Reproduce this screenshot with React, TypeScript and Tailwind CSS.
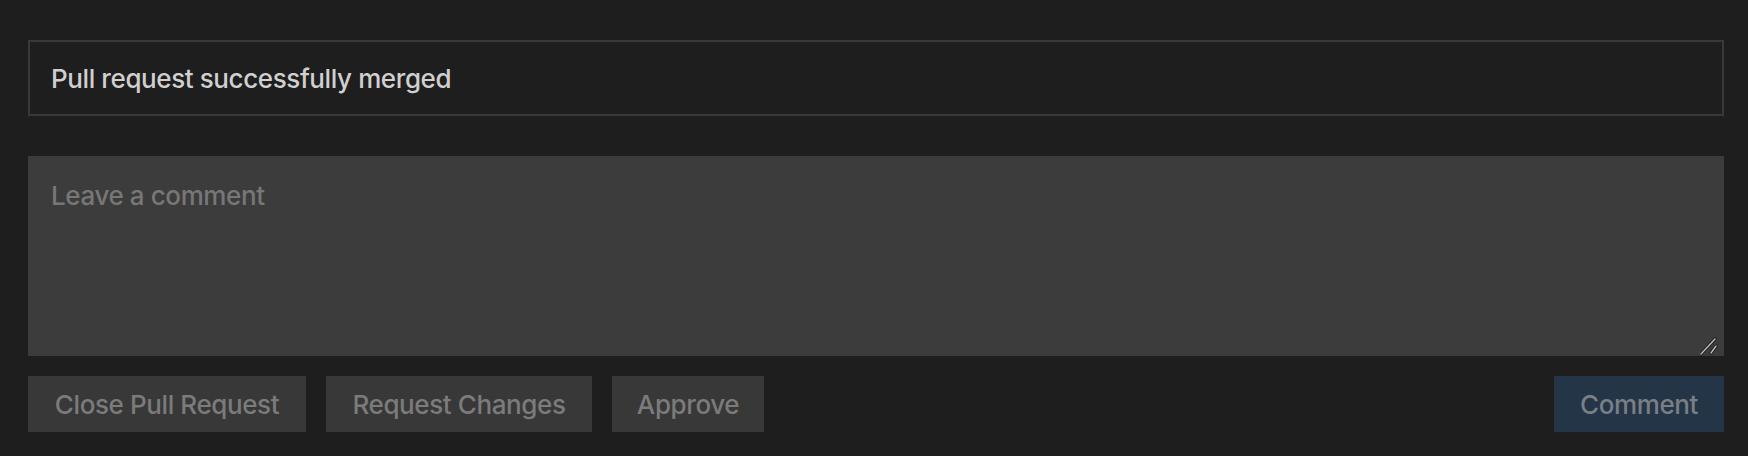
import React from "react";

export default function App() {
  const font = { fontFamily: "Inter, 'Noto Sans', sans-serif" };
  return (
    <div
      className="w-[1748px] h-[456px] bg-[#1e1e1e] pl-[28px] pr-[24px] pt-[40px] flex flex-col"
      style={font}
    >
      <div className="h-[76px] border-2 border-[#38383d] flex items-center pl-[21px] text-[26px] font-medium text-[#d0d0d0] tracking-[-0.4px]">
        Pull request successfully merged
      </div>
      <div className="relative mt-[40px] h-[200px]">
        <textarea
          className="block h-[200px] w-full bg-[#3c3c3c] text-[26px] font-medium text-[#cccccc] placeholder:text-[#777777] px-[23px] pt-[20px] outline-none resize-none tracking-[-0.4px]"
          placeholder="Leave a comment"
          style={font}
        />
        <svg
          className="absolute right-[4px] bottom-0 pointer-events-none"
          width="20"
          height="20"
          viewBox="0 0 20 20"
        >
          <path d="M1 18 L15 3 M11 17 L16 10" stroke="#1a1a1a" strokeWidth="3.2" strokeLinecap="round" fill="none" />
          <path d="M1 18 L15 3 M11 17 L16 10" stroke="#bdbdbd" strokeWidth="1.4" strokeLinecap="round" fill="none" />
        </svg>
      </div>
      <div className="mt-[20px] flex items-center h-[56px]">
        <div className="flex gap-[20px]">
          <button className="h-[56px] w-[278px] bg-[#383838] text-[#7b7b7b] text-[26px] font-medium tracking-[-0.4px]">
            Close Pull Request
          </button>
          <button className="h-[56px] w-[266px] bg-[#383838] text-[#7b7b7b] text-[26px] font-medium tracking-[-0.4px]">
            Request Changes
          </button>
          <button className="h-[56px] w-[152px] bg-[#383838] text-[#7b7b7b] text-[26px] font-medium tracking-[-0.4px]">
            Approve
          </button>
        </div>
        <button className="ml-auto h-[56px] w-[170px] bg-[#243548] text-[#7a7f86] text-[26px] font-medium tracking-[-0.4px]">
          Comment
        </button>
      </div>
    </div>
  );
}
